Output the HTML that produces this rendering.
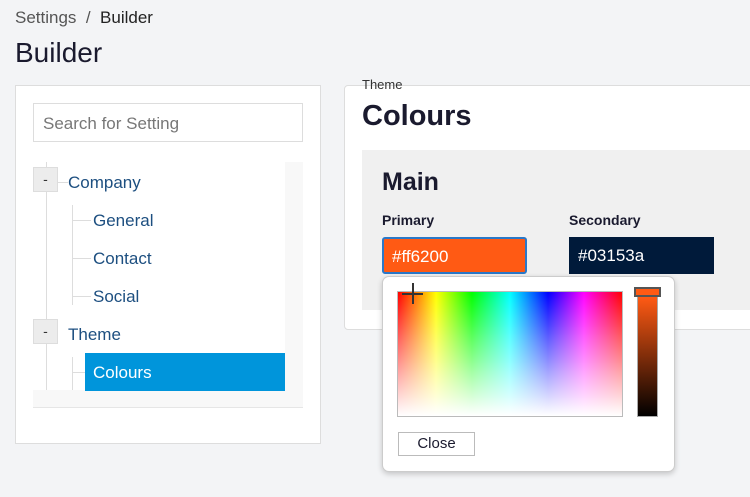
<!DOCTYPE html><html><head><style>
*{box-sizing:border-box;margin:0;padding:0}
body{width:750px;height:497px;overflow:hidden;background:#f3f4f6;font-family:"Liberation Sans",sans-serif;position:relative;color:#1a1a2e}
.a{position:absolute}
.tree div.t{position:absolute;color:#1d4f80;font-size:17px}
.mb{position:absolute;width:25px;height:25px;background:#ececec;border:1px solid #ddd;font-size:14px;text-align:center;line-height:22px;color:#333}
</style></head><body>
<div class="a" style="left:15px;top:8px;font-size:17px;color:#555">Settings &nbsp;/&nbsp; <span style="color:#222">Builder</span></div>
<div class="a" style="left:15px;top:37px;font-size:28px;color:#1a1a2e">Builder</div>
<div class="a" style="left:15px;top:85px;width:306px;height:359px;background:#fff;border:1px solid #ddd"></div>
<div class="a" style="left:33px;top:103px;width:270px;height:39px;border:1px solid #ddd;background:#fff;font-size:17px;color:#777;padding:10px 9px">Search for Setting</div>
<div class="a tree" style="left:33px;top:162px;width:270px;height:246px;background:#f8f8f8;border-bottom:1px solid #e6e6e6">
 <div class="a" style="left:0;top:0;width:252px;height:228px;background:#fff"></div>
 <div class="a" style="left:13px;top:0;width:1px;height:228px;background:#ddd"></div>
 <div class="a" style="left:39px;top:43px;width:1px;height:100px;background:#ddd"></div>
 <div class="a" style="left:39px;top:195px;width:1px;height:33px;background:#ddd"></div>
 <div class="a" style="left:25px;top:20px;width:10px;height:1px;background:#ddd"></div>
 <div class="a" style="left:40px;top:58px;width:18px;height:1px;background:#ddd"></div>
 <div class="a" style="left:40px;top:96px;width:18px;height:1px;background:#ddd"></div>
 <div class="a" style="left:40px;top:134px;width:18px;height:1px;background:#ddd"></div>
 <div class="a" style="left:40px;top:210px;width:18px;height:1px;background:#ddd"></div>
 <div class="mb" style="left:0;top:5px">-</div>
 <div class="mb" style="left:0;top:157px">-</div>
 <div class="t" style="left:35px;top:11px">Company</div>
 <div class="t" style="left:60px;top:49px">General</div>
 <div class="t" style="left:60px;top:87px">Contact</div>
 <div class="t" style="left:60px;top:125px">Social</div>
 <div class="t" style="left:35px;top:163px">Theme</div>
 <div class="a" style="left:52px;top:191px;width:200px;height:38px;background:#0095db"></div>
 <div class="t" style="left:60px;top:201px;color:#fff">Colours</div>
</div>
<div class="a" style="left:344px;top:85px;width:420px;height:245px;background:#fff;border:1px solid #ddd;border-radius:4px"></div>
<div class="a" style="left:362px;top:77px;font-size:13px;color:#333">Theme</div>
<div class="a" style="left:362px;top:100px;font-size:29px;font-weight:bold">Colours</div>
<div class="a" style="left:362px;top:150px;width:400px;height:160px;background:#f0f0f0"></div>
<div class="a" style="left:382px;top:168px;font-size:25px;font-weight:bold">Main</div>
<div class="a" style="left:382px;top:212px;font-size:14px;font-weight:bold">Primary</div>
<div class="a" style="left:569px;top:212px;font-size:14px;font-weight:bold">Secondary</div>
<div class="a" style="left:382px;top:237px;width:145px;height:37px;background:#ff5a14;border:2px solid #2a78c8;border-radius:3px;color:#fff;font-size:17px;padding:8px 8px">#ff6200</div>
<div class="a" style="left:569px;top:237px;width:145px;height:37px;background:#001a3a;color:#fff;font-size:17px;padding:9px 9px">#03153a</div>
<div class="a" style="left:382px;top:276px;width:293px;height:196px;background:#fff;border:1px solid #ccc;border-radius:7px;box-shadow:0 2px 6px rgba(0,0,0,.2)"></div>
<div class="a" style="left:397px;top:291px;width:226px;height:126px;border:1px solid #bbb;background:linear-gradient(to bottom,rgba(255,255,255,0),#fff),linear-gradient(to right,#f00,#ff0 17%,#0f0 33%,#0ff 50%,#00f 67%,#f0f 83%,#f00)"></div>
<div class="a" style="left:412px;top:283px;width:1.5px;height:21px;background:#333"></div>
<div class="a" style="left:402px;top:293px;width:21px;height:1.5px;background:#333"></div>
<div class="a" style="left:637px;top:296px;width:21px;height:121px;border:1px solid #aaa;background:linear-gradient(#ff5a14,#000)"></div>
<div class="a" style="left:634px;top:287px;width:27px;height:10px;border:2px solid #555;background:#ff5a14"></div>
<div class="a" style="left:398px;top:432px;width:77px;height:24px;border:1px solid #bbb;background:#fff;font-size:15px;text-align:center;line-height:22px">Close</div>
</body></html>
